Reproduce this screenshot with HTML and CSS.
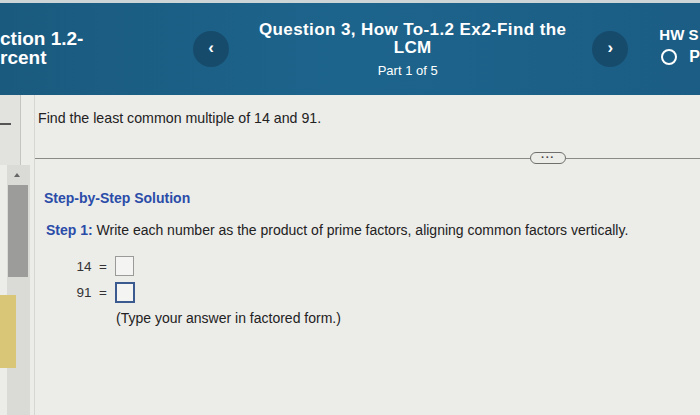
FILE: index.html
```html
<!DOCTYPE html>
<html>
<head>
<meta charset="utf-8">
<link rel="stylesheet" href="styles.css">
</head>
<body>
<div class="page">
  <header class="header">
    <div class="sec">ction 1.2-<br>rcent</div>
    <div class="nav"><span class="chev">&lsaquo;</span></div>
    <div class="title">
      <div class="t1">Question 3, How To-1.2 Ex2-Find the</div>
      <div class="t1">LCM</div>
      <div class="t2">Part 1 of 5</div>
    </div>
    <div class="nav"><span class="chev">&rsaquo;</span></div>
    <div class="hw">
      <div class="hw1">HW S</div>
      <div class="hw2"><span class="ring"></span>P</div>
    </div>
  </header>
  <div class="body">
    <div class="side">
      <div class="side-top"><span class="dash"></span></div>
      <div class="scroll">
        <div class="arrow"></div>
        <div class="thumb"></div>
      </div>
      <div class="yellow"></div>
    </div>
    <main class="main">
      <p class="question">Find the least common multiple of 14 and 91.</p>
      <div class="divider">
        <div class="line short"></div>
        <div class="pill">&middot;&middot;&middot;</div>
        <div class="line"></div>
      </div>
      <p class="sol">Step-by-Step Solution</p>
      <p class="step"><b>Step 1:</b> Write each number as the product of prime factors, aligning common factors vertically.</p>
      <div class="eqs">
        <span class="lbl">14 &nbsp;=</span><span class="box"></span>
        <span class="lbl">91 &nbsp;=</span><span class="box active"></span>
      </div>
      <p class="hint">(Type your answer in factored form.)</p>
    </main>
  </div>
</div>
</body>
</html>
```

FILE: styles.css
```css
html, body {
  margin: 0;
  padding: 0;
}
body {
  width: 700px;
  height: 415px;
  overflow: hidden;
  background: #ecece9;
  font-family: "Liberation Sans", Arial, sans-serif;
  color: #222;
}
.page {
  display: flex;
  flex-direction: column;
  height: 415px;
}
.header {
  box-sizing: border-box;
  height: 95px;
  border-top: 3px solid #cdd5d7;
  background: linear-gradient(90deg, #1a5a7f 0%, #1d648c 50%, #1b5d84 100%);
  display: flex;
  align-items: center;
  color: #fff;
  flex-shrink: 0;
}
.sec {
  width: 193px;
  font-weight: bold;
  font-size: 19px;
  line-height: 19px;
  margin-top: -2px;
}
.nav {
  width: 36px;
  height: 36px;
  border-radius: 50%;
  background: #174b6b;
  display: flex;
  align-items: center;
  justify-content: center;
  flex-shrink: 0;
}
.chev {
  font-size: 17px;
  font-weight: bold;
  line-height: 1;
  margin-top: -3px;
}
.title {
  flex: 1;
  text-align: center;
  padding-left: 4px;
  margin-top: 2px;
}
.t1 {
  font-weight: bold;
  font-size: 17px;
  line-height: 18px;
  letter-spacing: 0.4px;
}
.t2 {
  font-size: 13px;
  line-height: 16px;
  margin-top: 6px;
  margin-right: 10px;
}
.hw {
  margin-left: 31px;
  font-weight: bold;
  font-size: 15px;
  margin-top: -6px;
}
.hw1 {
  line-height: 18px;
}
.hw2 {
  display: flex;
  align-items: center;
  margin-top: 4px;
  font-size: 16px;
}
.ring {
  width: 12px;
  height: 12px;
  border: 2px solid #fff;
  border-radius: 50%;
  margin-left: 2px;
  margin-right: 12px;
}
.body {
  flex: 1;
  display: flex;
}
.side {
  width: 34px;
  flex-shrink: 0;
  display: flex;
  flex-direction: column;
  position: relative;
  border-right: 1px solid #d6d6d3;
}
.side-top {
  width: 20px;
  height: 70px;
  background: #e2e2df;
  border-right: 1px solid #c4c4c1;
  position: relative;
}
.dash {
  position: absolute;
  left: 0;
  top: 28px;
  width: 11px;
  height: 2px;
  background: #555;
}
.scroll {
  flex: 1;
  margin-left: 7px;
  width: 23px;
  background: #dadad7;
}
.arrow {
  height: 20px;
  display: flex;
  justify-content: center;
  align-items: center;
}
.arrow::before {
  content: "";
  border-left: 3px solid transparent;
  border-right: 3px solid transparent;
  border-bottom: 4px solid #666;
  margin-right: 4px;
}
.thumb {
  width: 20px;
  height: 92px;
  margin-left: 1px;
  background: #9c9c9a;
}
.yellow {
  position: absolute;
  left: 0;
  top: 200px;
  width: 16px;
  height: 73px;
  background: #dac677;
}
.main {
  flex: 1;
  padding-top: 14px;
}
p {
  margin: 0;
}
.question {
  font-size: 14.2px;
  line-height: 18px;
  margin-left: 3px;
}
.divider {
  display: flex;
  align-items: center;
  height: 12px;
  margin-top: 25px;
}
.line {
  flex: 1;
  height: 1px;
  background: #8a8a88;
}
.line.short {
  flex: 0 0 495px;
}
.pill {
  box-sizing: border-box;
  width: 36px;
  height: 12px;
  border: 1px solid #6f6f6d;
  border-radius: 6px;
  font-size: 11px;
  line-height: 8px;
  text-align: center;
  color: #444;
  font-weight: bold;
  letter-spacing: 1px;
}
.sol {
  margin-top: 25px;
  margin-left: 9px;
  font-size: 14px;
  line-height: 18px;
  font-weight: bold;
  color: #2a4ca8;
}
.step {
  margin-top: 14px;
  margin-left: 11px;
  font-size: 14px;
  line-height: 18px;
}
.step b {
  color: #2a4ca8;
}
.eqs {
  margin-top: 17px;
  display: grid;
  grid-template-columns: 72px 20px;
  column-gap: 8px;
  row-gap: 6px;
  align-items: center;
}
.lbl {
  text-align: right;
  font-size: 13.5px;
  color: #333;
}
.box {
  box-sizing: border-box;
  width: 19px;
  height: 20px;
  border: 1px solid #9a9a98;
  background: #f4f4f2;
}
.box.active {
  width: 20px;
  height: 21px;
  border: 2px solid #3b5a8f;
}
.hint {
  margin-top: 6px;
  margin-left: 81px;
  font-size: 14px;
  line-height: 18px;
}
```
